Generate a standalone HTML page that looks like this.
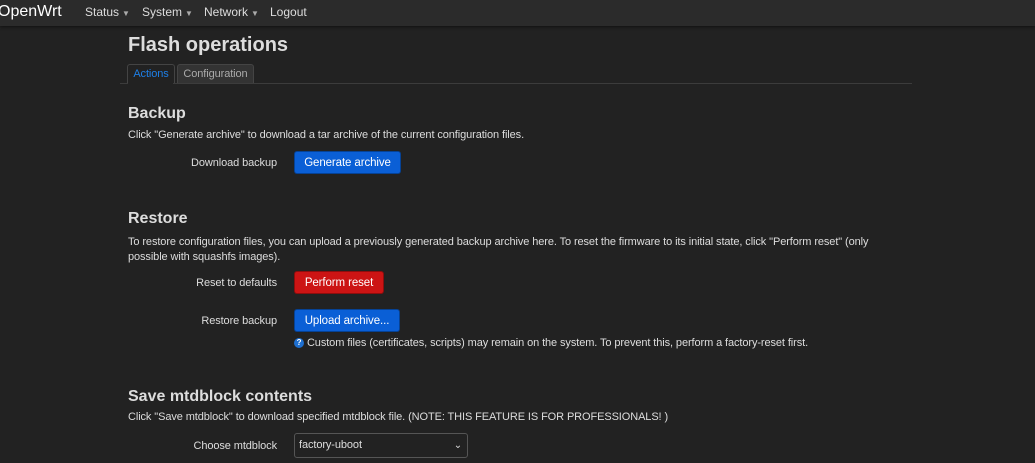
<!DOCTYPE html>
<html><head><style>
body{margin:0;background:#222;font-family:"Liberation Sans",Arial,sans-serif;color:#ddd;width:1035px;height:463px;overflow:hidden;position:relative;font-size:11px;letter-spacing:-0.1px}
.a{position:absolute;white-space:nowrap}
.nav{position:absolute;left:0;top:0;width:1035px;height:26px;background:#2b2b2b;box-shadow:0 1px 3px #111;letter-spacing:0}
.car{font-size:8px;color:#aaa;margin-left:3px}
h{position:absolute;font-weight:bold;color:#ddd;white-space:nowrap;letter-spacing:0}
.btn{position:absolute;border-radius:3px;color:#fff;text-align:center;font-size:11.5px;box-sizing:border-box;border:1px solid rgba(0,0,0,.3)}
.lbl{position:absolute;right:758px;text-align:right;white-space:nowrap;color:#ddd}
</style></head><body>
<div class="nav">
<span class="a" style="left:-2px;top:3px;font-size:16px;color:#fff">OpenWrt</span>
<span class="a" style="left:85px;top:5px;font-size:12px">Status<span class="car">▼</span></span>
<span class="a" style="left:142px;top:5px;font-size:12px">System<span class="car">▼</span></span>
<span class="a" style="left:204px;top:5px;font-size:12px">Network<span class="car">▼</span></span>
<span class="a" style="left:270px;top:5px;font-size:12px">Logout</span>
</div>
<h style="left:128px;top:34px;font-size:20px">Flash operations</h>
<div class="a" style="left:127px;top:64px;width:46px;height:19px;border:1px solid #444;border-bottom:none;background:#222;color:#1e7fe6;text-align:center;line-height:19px;border-radius:3px 3px 0 0">Actions</div>
<div class="a" style="left:177px;top:64px;width:75px;height:18px;border:1px solid #444;background:#333;color:#aaa;text-align:center;line-height:18px;border-radius:3px 3px 0 0">Configuration</div>
<div class="a" style="left:120px;top:83px;width:792px;height:1px;background:#3c3c3c"></div>
<div class="a" style="left:128px;top:83px;width:45px;height:1px;background:#222"></div>

<h style="left:128px;top:105px;font-size:16px">Backup</h>
<span class="a" style="left:128px;top:129px">Click "Generate archive" to download a tar archive of the current configuration files.</span>
<span class="lbl" style="top:157px">Download backup</span>
<div class="btn" style="left:294px;top:151px;width:107px;height:23px;line-height:22px;background:#0a5fd6">Generate archive</div>

<h style="left:128px;top:210px;font-size:16px">Restore</h>
<span class="a" style="left:128px;top:236px">To restore configuration files, you can upload a previously generated backup archive here. To reset the firmware to its initial state, click "Perform reset" (only</span>
<span class="a" style="left:128px;top:251px">possible with squashfs images).</span>
<span class="lbl" style="top:277px">Reset to defaults</span>
<div class="btn" style="left:294px;top:271px;width:90px;height:23px;line-height:22px;background:#cc1414">Perform reset</div>
<span class="lbl" style="top:315px">Restore backup</span>
<div class="btn" style="left:294px;top:309px;width:106px;height:23px;line-height:22px;background:#0a5fd6">Upload archive...</div>
<span class="a" style="left:294px;top:337px"><span style="display:inline-block;width:10px;height:10px;border-radius:50%;background:#1e6fd0;color:#fff;font-size:8px;text-align:center;line-height:10px;font-weight:bold;vertical-align:1px">?</span> Custom files (certificates, scripts) may remain on the system. To prevent this, perform a factory-reset first.</span>

<h style="left:128px;top:388px;font-size:16px">Save mtdblock contents</h>
<span class="a" style="left:128px;top:411px">Click "Save mtdblock" to download specified mtdblock file. (NOTE: THIS FEATURE IS FOR PROFESSIONALS! )</span>
<span class="lbl" style="top:440px">Choose mtdblock</span>
<div class="a" style="left:294px;top:433px;width:174px;height:25px;box-sizing:border-box;border:1px solid #555;border-radius:3px;background:#222;line-height:23px;padding-left:4px">factory-uboot<span style="position:absolute;right:5px;top:0;font-size:10px">⌄</span></div>
</body></html>
